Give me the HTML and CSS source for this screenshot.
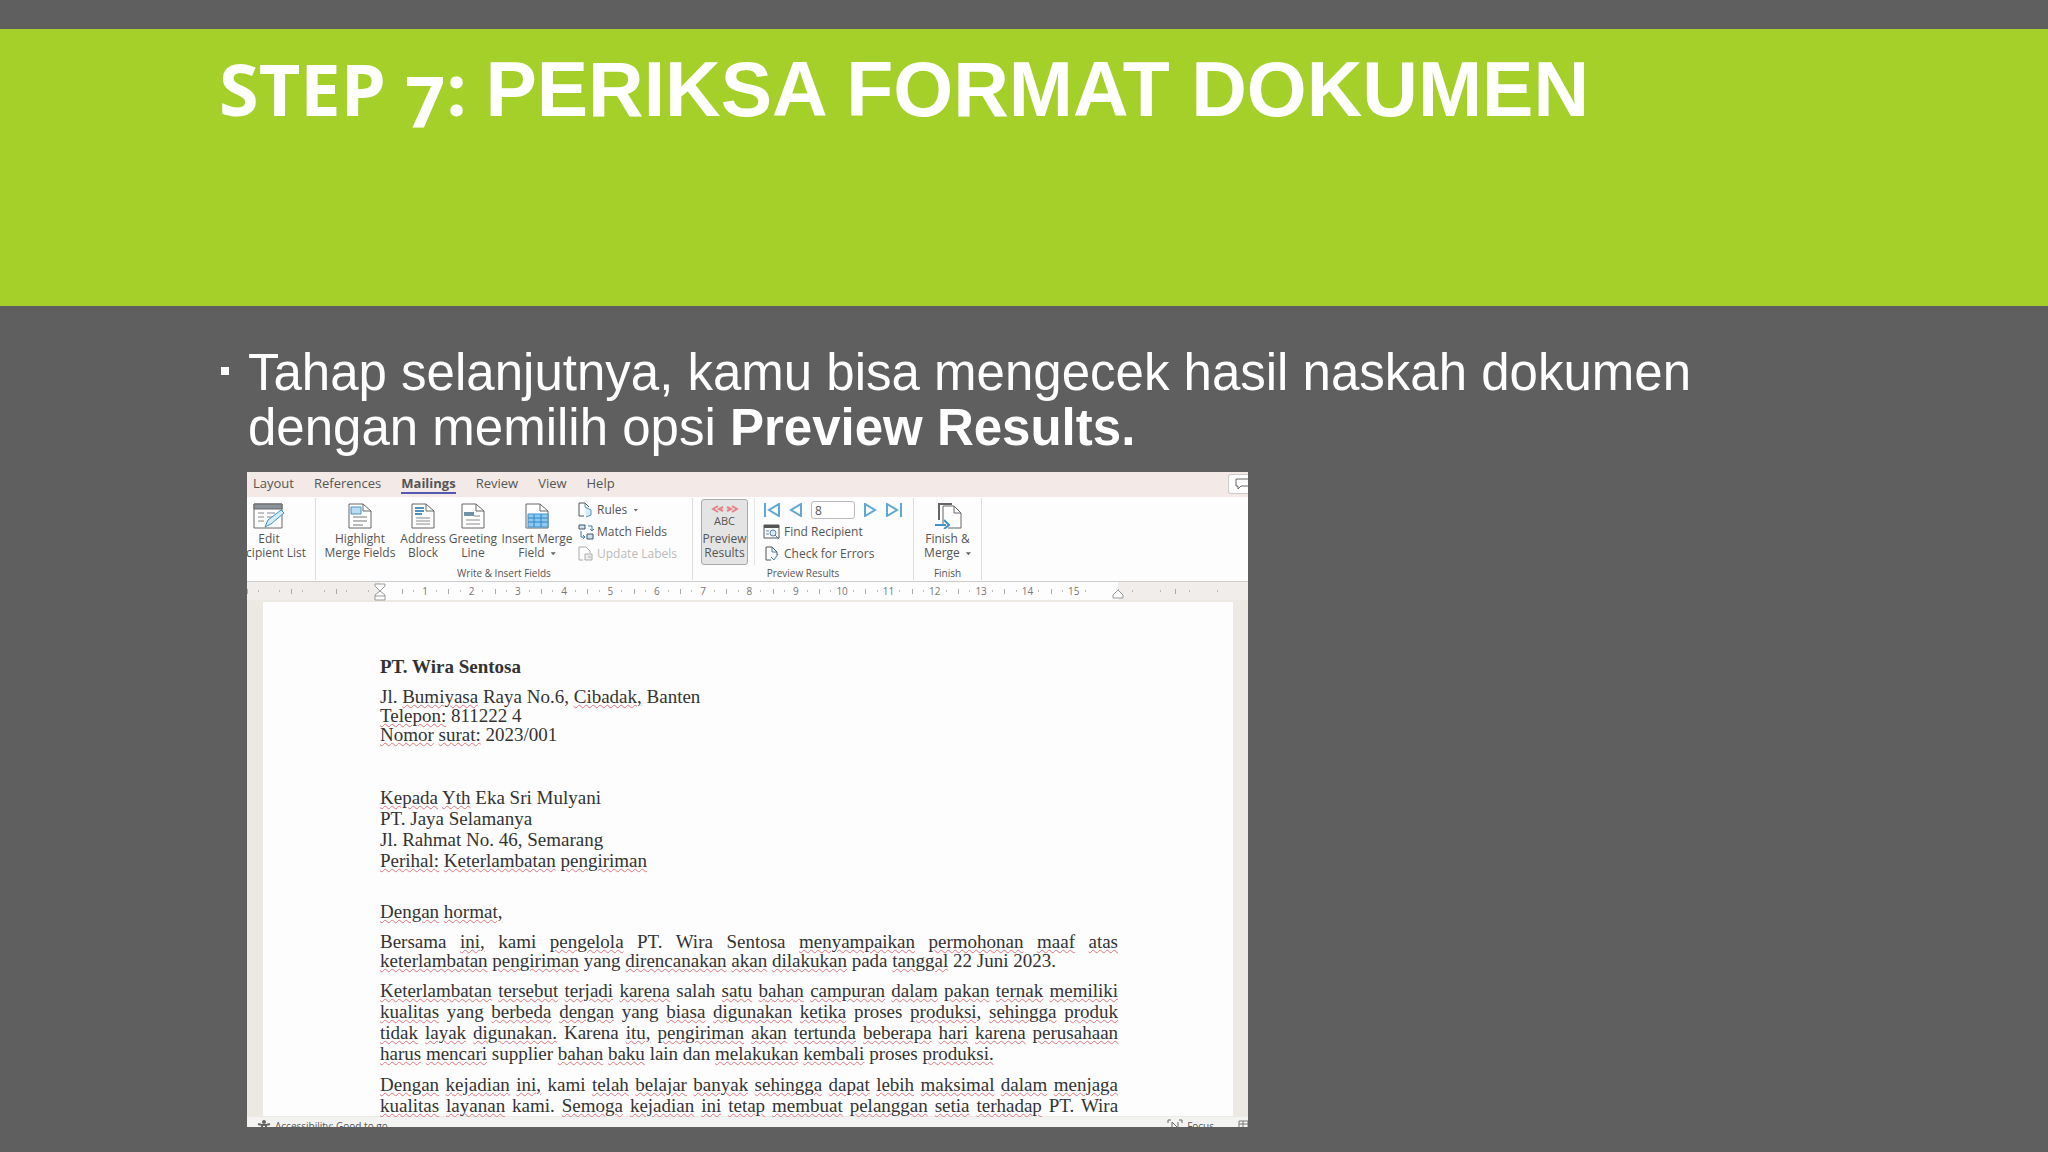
FILE: index.html
```html
<!DOCTYPE html>
<html lang="id">
<head>
    <meta charset="UTF-8">
    <meta name="viewport" content="width=device-width, initial-scale=1.0">
    <title>Step 7: Periksa Format Dokumen</title>
    <link rel="stylesheet" href="styles.css">
</head>
<body>
    <header class="banner">
        <h1><span class="step">STEP 7: </span>PERIKSA FORMAT DOKUMEN</h1>
    </header>

    <main class="content">
        <ul class="points">
            <li>Tahap selanjutnya, kamu bisa mengecek hasil naskah dokumen dengan memilih opsi <b>Preview Results.</b></li>
        </ul>

        <section class="word">
            <!-- Tabs -->
            <nav class="tabs">
                <a href="#">Layout</a>
                <a href="#">References</a>
                <a href="#" class="active">Mailings</a>
                <a href="#">Review</a>
                <a href="#">View</a>
                <a href="#">Help</a>
                <button class="comment" aria-label="Comments">
                    <svg width="16" height="14" viewBox="0 0 16 14"><path d="M2 2h14v7H7l-3 3V9H2z" fill="none" stroke="#666"/></svg>
                </button>
            </nav>

            <!-- Ribbon -->
            <div class="ribbon">
                <div class="group group-start">
                    <div class="tools">
                        <button class="big edit">
                            <svg width="32" height="26" viewBox="0 0 32 26">
                                <path d="M1 1h28v24H1z" fill="#fff" stroke="#666"/>
                                <path d="M1 1h28v5H1z" fill="#8b9299" stroke="#666"/>
                                <path d="M5 10h6M5 14h6M5 18h6M14 10h8M14 14h5M14 18h3" stroke="#888"/>
                                <path d="M12 24l3-7L28 7l3 3-13 11z" fill="#d5ebf8" stroke="#3d93c9"/>
                            </svg>
                            <span>Edit<br>Recipient List</span>
                        </button>
                    </div>
                </div>

                <div class="group group-write">
                    <div class="tools">
                        <button class="big highlight">
                            <svg width="24" height="26" viewBox="0 0 24 26">
                                <path d="M1 1h14l8 7v17H1z" fill="#fff" stroke="#666"/>
                                <path d="M15 1v7h8" fill="none" stroke="#666"/>
                                <path d="M3 4h10v7H3z" fill="#b9dcf1" stroke="#4f91bd"/>
                                <path d="M5 14h14M5 18h14M5 22h10" stroke="#777"/>
                            </svg>
                            <span>Highlight<br>Merge Fields</span>
                        </button>
                        <button class="big address">
                            <svg width="24" height="26" viewBox="0 0 24 26">
                                <path d="M1 1h14l8 7v17H1z" fill="#fff" stroke="#666"/>
                                <path d="M15 1v7h8" fill="none" stroke="#666"/>
                                <path d="M4 5h9M4 8h9M4 11h7" stroke="#4f91bd" stroke-width="2"/>
                                <path d="M5 15h14M5 18h14M5 21h14" stroke="#888"/>
                            </svg>
                            <span>Address<br>Block</span>
                        </button>
                        <button class="big greeting">
                            <svg width="24" height="26" viewBox="0 0 24 26">
                                <path d="M1 1h14l8 7v17H1z" fill="#fff" stroke="#666"/>
                                <path d="M15 1v7h8" fill="none" stroke="#666"/>
                                <path d="M3 9h10v4H3z" fill="#6f93a8"/>
                                <path d="M13 13h6M5 17h14M5 21h14" stroke="#888"/>
                            </svg>
                            <span>Greeting<br>Line</span>
                        </button>
                        <button class="big insert">
                            <svg width="24" height="26" viewBox="0 0 24 26">
                                <path d="M1 1h14l8 7v17H1z" fill="#fff" stroke="#666"/>
                                <path d="M15 1v7h8" fill="none" stroke="#666"/>
                                <path d="M3 11h20v13H3z" fill="#8cc8ef" stroke="#3d93c9"/>
                                <path d="M3 15h20M3 19h20M9 11v13M16 11v13" stroke="#2f86c2"/>
                            </svg>
                            <span>Insert Merge<br>Field <i class="caret"></i></span>
                        </button>
                        <div class="rows">
                            <button class="small">
                                <svg width="16" height="16" viewBox="0 0 16 16"><path d="M6 14H1V1h6l4 4" fill="none" stroke="#555"/><path d="M7 1v4l6 3v5l-5 2" fill="#d5ebf8" stroke="#4f91bd"/></svg>
                                Rules <i class="caret"></i>
                            </button>
                            <button class="small">
                                <svg width="16" height="16" viewBox="0 0 16 16"><path d="M1 1h6v4H1zM9 10h6v5H9z" fill="#cfe3ef" stroke="#456"/><path d="M10 2h4v5M12 5l2 2 2-2M3 7v6h4M5 11l2 2-2 2" fill="none" stroke="#3d7fa5"/></svg>
                                Match Fields
                            </button>
                            <button class="small" disabled>
                                <svg width="16" height="16" viewBox="0 0 16 16"><path d="M1 1h7l4 4v2M1 1v13h4" fill="none" stroke="#aaa"/><path d="M7 8h7v6H7zM10 11h3" fill="#eee" stroke="#aaa"/></svg>
                                Update Labels
                            </button>
                        </div>
                    </div>
                    <p class="group-name">Write &amp; Insert Fields</p>
                </div>

                <div class="group group-preview">
                    <div class="tools">
                        <button class="preview">
                            <svg width="28" height="10" viewBox="0 0 28 10"><path d="M7 2L2 5l5 3M12 3L8 5l4 2M21 2l5 3-5 3M16 3l4 2-4 2" fill="none" stroke="#e58389" stroke-width="2"/></svg>
                            <span class="abc">ABC</span>
                            <span>Preview<br>Results</span>
                        </button>
                        <div class="rows results">
                            <div class="record">
                                <button aria-label="First record"><svg width="18" height="14" viewBox="0 0 18 14"><path d="M2 0v14M16 1v12L6 7z" fill="none" stroke="#5fa8d6" stroke-width="2"/></svg></button>
                                <button aria-label="Previous record"><svg width="14" height="14" viewBox="0 0 14 14"><path d="M12 1v12L2 7z" fill="none" stroke="#5fa8d6" stroke-width="2"/></svg></button>
                                <input type="text" value="8" aria-label="Record">
                                <button aria-label="Next record"><svg width="14" height="14" viewBox="0 0 14 14"><path d="M2 1v12l10-6z" fill="none" stroke="#5fa8d6" stroke-width="2"/></svg></button>
                                <button aria-label="Last record"><svg width="18" height="14" viewBox="0 0 18 14"><path d="M16 0v14M2 1v12l10-6z" fill="none" stroke="#5fa8d6" stroke-width="2"/></svg></button>
                            </div>
                            <button class="small">
                                <svg width="18" height="16" viewBox="0 0 18 16"><path d="M1 1h15v13H1z" fill="#fff" stroke="#555"/><path d="M1 1h15v3H1z" fill="#555"/><circle cx="10" cy="9" r="3" fill="#d5ebf8" stroke="#5b7fae"/><path d="M12 11l4 4M3 7h3M3 10h3" stroke="#5b7fae"/></svg>
                                Find Recipient
                            </button>
                            <button class="small">
                                <svg width="18" height="16" viewBox="0 0 18 16"><path d="M8 14H3V1h6l5 5v3" fill="none" stroke="#555"/><path d="M9 1v5h5M8 11l3 3 4-6" fill="none" stroke="#3d7fa5"/></svg>
                                Check for Errors
                            </button>
                        </div>
                    </div>
                    <p class="group-name">Preview Results</p>
                </div>

                <div class="group group-finish">
                    <div class="tools">
                        <button class="big">
                            <svg width="28" height="26" viewBox="0 0 28 26">
                                <path d="M5 17V1h13" fill="none" stroke="#666" stroke-width="2"/>
                                <path d="M9 21V3h11l7 7v15H14" fill="#fff" stroke="#666"/>
                                <path d="M20 3v7h7" fill="none" stroke="#666"/>
                                <path d="M1 22h11M10 17l5 5-5 4" fill="none" stroke="#3d93c9" stroke-width="2"/>
                            </svg>
                            <span>Finish &amp;<br>Merge <i class="caret"></i></span>
                        </button>
                    </div>
                    <p class="group-name">Finish</p>
                </div>
            </div>

            <!-- Ruler, one cell per centimetre -->
            <div class="ruler">
                <div class="ruler-out ruler-left"><span></span><span></span><span></span></div>
                <div class="ruler-in">
                    <svg class="indent" width="14" height="18" viewBox="0 0 14 18"><path d="M2 1h10v2L7 8 2 3zM7 8l5 4v5H2v-5zM2 13h10" fill="#fff" stroke="#999"/></svg>
                    <span>1</span><span>2</span><span>3</span><span>4</span><span>5</span>
                    <span>6</span><span>7</span><span>8</span><span>9</span><span>10</span>
                    <span>11</span><span>12</span><span>13</span><span>14</span><span>15</span>
                    <svg class="indent-right" width="14" height="10" viewBox="0 0 14 10"><path d="M2 9V6l5-5 5 5v3z" fill="#fff" stroke="#999"/></svg>
                </div>
                <div class="ruler-out ruler-right"><span></span><span></span></div>
            </div>

            <!-- Letter -->
            <div class="desk">
                <article class="letter">
                    <p><b>PT. Wira Sentosa</b></p>
                    <p class="lines">
                        Jl. <u>Bumiyasa</u> Raya No.6, <u>Cibadak,</u> Banten<br>
                        <u>Telepon:</u> 811222 4<br>
                        <u>Nomor</u> <u>surat:</u> 2023/001
                    </p>
                    <p class="receiver">
                        <u>Kepada</u> <u>Yth</u> Eka Sri Mulyani<br>
                        PT. Jaya Selamanya<br>
                        Jl. Rahmat No. 46, Semarang<br>
                        <u>Perihal:</u> <u>Keterlambatan</u> <u>pengiriman</u>
                    </p>
                    <p><u>Dengan</u> <u>hormat,</u></p>
                    <p class="lines">
                        <span class="full">Bersama <u>ini,</u> kami <u>pengelola</u> PT. Wira Sentosa <u>menyampaikan</u> <u>permohonan</u> <u>maaf</u> <u>atas</u></span>
                        <u>keterlambatan</u> <u>pengiriman</u> yang <u>direncanakan</u> <u>akan</u> <u>dilakukan</u> pada <u>tanggal</u> 22 Juni 2023.
                    </p>
                    <p>
                        <span class="full"><u>Keterlambatan</u> <u>tersebut</u> <u>terjadi</u> <u>karena</u> salah <u>satu</u> <u>bahan</u> <u>campuran</u> <u>dalam</u> <u>pakan</u> <u>ternak</u> <u>memiliki</u></span>
                        <span class="full"><u>kualitas</u> yang <u>berbeda</u> <u>dengan</u> yang <u>biasa</u> <u>digunakan</u> <u>ketika</u> proses <u>produksi,</u> <u>sehingga</u> <u>produk</u></span>
                        <span class="full"><u>tidak</u> <u>layak</u> <u>digunakan.</u> Karena <u>itu,</u> <u>pengiriman</u> <u>akan</u> <u>tertunda</u> <u>beberapa</u> <u>hari</u> <u>karena</u> <u>perusahaan</u></span>
                        <u>harus</u> <u>mencari</u> supplier <u>bahan</u> <u>baku</u> lain dan <u>melakukan</u> <u>kembali</u> proses <u>produksi.</u>
                    </p>
                    <p>
                        <span class="full"><u>Dengan</u> <u>kejadian</u> <u>ini,</u> kami <u>telah</u> <u>belajar</u> <u>banyak</u> <u>sehingga</u> <u>dapat</u> <u>lebih</u> <u>maksimal</u> <u>dalam</u> <u>menjaga</u></span>
                        <span class="full"><u>kualitas</u> <u>layanan</u> kami. <u>Semoga</u> <u>kejadian</u> <u>ini</u> <u>tetap</u> <u>membuat</u> <u>pelanggan</u> <u>setia</u> <u>terhadap</u> PT. Wira</span>
                    </p>
                </article>
            </div>

            <footer class="status">
                <svg width="14" height="12" viewBox="0 0 14 12"><path d="M1 5l4 1v5M13 5L9 6v5M5 6h4" fill="none" stroke="#666" stroke-width="2"/><circle cx="7" cy="3" r="2" fill="#666"/></svg>
                <span>Accessibility: Good to go</span>
                <svg class="focus" width="16" height="12" viewBox="0 0 16 12"><path d="M1 4V1h3M12 1h3v3M5 12V3l6 6V3" fill="none" stroke="#666"/></svg>
                <span>Focus</span>
                <svg class="read" width="10" height="12" viewBox="0 0 10 12"><path d="M1 2h9v9H1zM5 2v9M1 5h9" fill="none" stroke="#777"/></svg>
            </footer>
        </section>
    </main>
</body>
</html>
```

FILE: styles.css
```css
* {
    box-sizing: border-box;
}
body {
    margin: 0;
    height: 100vh;
    padding: 29px 0 25px;
    display: flex;
    flex-direction: column;
    background: #5f5f5f;
    color: #fff;
    font-family: "Liberation Sans", Arial, sans-serif;
}
p, h1, ul {
    margin: 0;
}

/* Title */
.banner {
    flex: 0 0 277px;
    padding: 16px 219px;
    background: #a4d029;
}
h1 {
    font-size: 77px;
    line-height: 88px;
}
.step {
    font-family: "Open Sans", "Noto Sans", sans-serif;
    font-size: 72px;
    font-weight: 700;
    font-variant-numeric: oldstyle-nums;
    line-height: 1;
}

/* Text */
.content {
    flex: 1;
    min-height: 0;
    display: flex;
    flex-direction: column;
    padding: 39px 219px 0;
}
.points {
    padding: 0 0 17px 29px;
    list-style: none;
    font-size: 51px;
    line-height: 55px;
}
.points li::before {
    content: "";
    float: left;
    width: 8px;
    height: 8px;
    margin: 22px 0 0 -27px;
    background: #fff;
}

/* Word window */
.word {
    flex: 1;
    min-height: 0;
    width: 1001px;
    max-width: 100%;
    margin-left: 28px;
    display: flex;
    flex-direction: column;
    overflow: hidden;
    background: #fdfdfd;
    color: #555;
    font-family: "Open Sans", "Noto Sans", sans-serif;
    font-size: 12px;
    line-height: 14px;
}
button {
    padding: 0;
    border: 0;
    background: none;
    color: inherit;
    font: inherit;
}
svg {
    flex: none;
    display: block;
}
.tabs {
    flex: 0 0 25px;
    display: flex;
    gap: 20px;
    padding-left: 6px;
    background: #f3e9e6;
    font-size: 13px;
    line-height: 22px;
}
.tabs a {
    height: 22px;
    color: #555;
    text-decoration: none;
}
.tabs .active {
    border-bottom: 2px solid #5558b0;
    font-weight: bold;
}
.comment {
    width: 20px;
    height: 20px;
    margin: 2px 0 0 auto;
    padding-left: 5px;
    border: 1px solid #ccc;
    border-right: 0;
    border-radius: 3px 0 0 3px;
    background: #fff;
}

/* Ribbon */
.ribbon {
    flex: 0 0 85px;
    display: flex;
    border-bottom: 1px solid #ccc;
}
.group {
    display: flex;
    flex-direction: column;
    justify-content: space-between;
    margin: 1px 0;
    border-right: 1px solid #ddd;
}
.group-start {
    width: 69px;
}
.group-write {
    width: 377px;
}
.group-preview {
    width: 221px;
}
.group-finish {
    width: 68px;
}
.tools {
    display: flex;
}
.group-name {
    font-size: 10px;
    line-height: 14px;
    text-align: center;
}
.big {
    display: flex;
    flex-direction: column;
    align-items: center;
    gap: 3px;
    padding-top: 5px;
    white-space: nowrap;
}
.group-finish .big {
    width: 100%;
}
.edit {
    width: 44px;
}
.highlight {
    width: 88px;
}
.address {
    width: 38px;
}
.greeting {
    width: 62px;
}
.insert {
    width: 66px;
}
.caret {
    display: inline-block;
    width: 5px;
    height: 3px;
    margin-left: 3px;
    background: #666;
    clip-path: polygon(0 0, 100% 0, 50% 100%);
    vertical-align: middle;
}
.rows {
    display: flex;
    flex-direction: column;
    padding: 1px 0 0 8px;
    white-space: nowrap;
}
.small {
    display: flex;
    align-items: center;
    gap: 3px;
    height: 22px;
}
.small:disabled {
    color: #bbb;
}
.preview {
    width: 47px;
    height: 66px;
    margin: 1px 6px 0 8px;
    display: flex;
    flex-direction: column;
    align-items: center;
    padding-top: 4px;
    border: 1px solid #aaa;
    border-radius: 3px;
    background: #e4e4e4;
}
.abc {
    margin-bottom: 4px;
    font-size: 11px;
}
.results {
    border-left: 1px solid #e6e6e6;
}
.record {
    height: 22px;
    display: flex;
    align-items: center;
    gap: 8px;
}
.record input {
    width: 44px;
    height: 18px;
    padding: 0 3px;
    border: 1px solid #bbb;
    border-radius: 3px;
    color: #555;
    font: inherit;
}

/* Ruler */
.ruler {
    flex: 0 0 18px;
    display: flex;
    background: #f0edea;
    color: #777;
    font-size: 10px;
    line-height: 18px;
    text-align: center;
}
.ruler span {
    flex: 1;
    background:
        linear-gradient(#aaa, #aaa) left center / 1px 5px no-repeat,
        linear-gradient(#bbb, #bbb) 25% center / 1px 2px no-repeat,
        linear-gradient(#bbb, #bbb) 75% center / 1px 2px no-repeat;
}
.ruler-out {
    display: flex;
}
.ruler-left {
    width: 133px;
}
.ruler-right {
    flex: 1;
    padding-right: 16px;
}
.ruler-in {
    position: relative;
    width: 738px;
    display: flex;
    padding: 0 21px 0 22px;
    background: #fdfdfd;
}
.indent {
    position: absolute;
    left: -7px;
    top: 1px;
}
.indent-right {
    position: absolute;
    right: -7px;
    bottom: 1px;
}

/* Letter */
.desk {
    flex: 1;
    min-height: 0;
    padding: 2px 15px 0 16px;
    background: #ece8e2;
    overflow: hidden;
}
.letter {
    padding: 54px 115px 0 117px;
    background: #fdfdfd;
    color: #333;
    font-family: "Liberation Serif", "Times New Roman", serif;
    font-size: 19px;
    line-height: 21px;
}
.letter p {
    margin-bottom: 10px;
}
.letter .lines {
    line-height: 19px;
}
.letter .receiver {
    margin: 43px 0 30px;
}
.letter u {
    text-decoration: underline wavy #e0737e 1px;
    text-underline-offset: 1px;
}
.full {
    display: block;
    text-align: justify;
    text-align-last: justify;
}

/* Status bar */
.status {
    flex: 0 0 10px;
    display: flex;
    gap: 4px;
    padding: 2px 0 0 10px;
    background: #f3f3f1;
    font-size: 10px;
    line-height: 14px;
    overflow: hidden;
}
.status .focus {
    margin-left: auto;
}
.status .read {
    margin-left: 20px;
}
```
